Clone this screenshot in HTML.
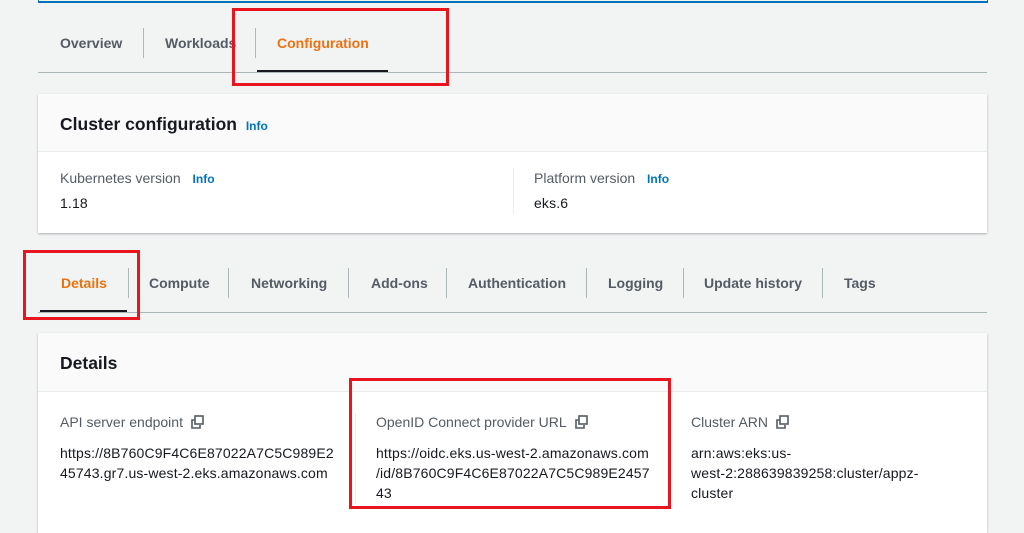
<!DOCTYPE html>
<html><head><meta charset="utf-8"><style>
*{margin:0;padding:0;box-sizing:border-box}
body{width:1024px;height:520px;background:#f2f3f3;font-family:"Liberation Sans",sans-serif;position:relative;overflow:hidden;color:#16191f}
.a{position:absolute;white-space:nowrap}
.tab{font-weight:bold;font-size:14px;color:#545b64}
.sep{position:absolute;width:1px;background:#aab7b8}
.card{position:absolute;left:38px;width:949px;background:#fff;box-shadow:0 1px 2px rgba(0,28,36,.3)}
.hd{background:#fafafa;border-bottom:1px solid #eaeded}
.lbl{font-size:14px;color:#545b64}
.val{font-size:14px;color:#16191f;line-height:20px;letter-spacing:0.15px}
.info{font-size:12px;font-weight:bold;color:#0073bb}
.red{position:absolute;border:3px solid #e8141e}
.cp{display:inline-block;vertical-align:-2px;margin-left:8px}
</style></head><body>
<div class="a" style="left:38px;top:0;width:950px;height:3px;border-bottom:2px solid #0073bb;border-left:1px solid #0073bb;border-right:1px solid #0073bb"></div>
<div class="a tab" style="left:60px;top:35px">Overview</div>
<div class="sep" style="left:143px;top:28px;height:30px"></div>
<div class="a tab" style="left:165px;top:35px">Workloads</div>
<div class="sep" style="left:255px;top:28px;height:30px"></div>
<div class="a tab" style="left:277px;top:35px;color:#ec7211">Configuration</div>
<div class="a" style="left:257px;top:70px;width:131px;height:2px;background:#16191f"></div>
<div class="a" style="left:38px;top:72px;width:949px;height:1px;background:#aab7b8"></div>

<div class="card" style="top:94px;height:139px">
<div class="hd" style="height:58px"></div>
<div class="a" style="left:22px;top:20px;font-size:17.5px;font-weight:bold">Cluster configuration <span class="info" style="margin-left:4px">Info</span></div>
<div class="a lbl" style="left:22px;top:76px">Kubernetes version <span class="info" style="margin-left:8px">Info</span></div>
<div class="a val" style="left:22px;top:99px">1.18</div>
<div class="sep" style="left:475px;top:74px;height:46px;background:#eaeded"></div>
<div class="a lbl" style="left:496px;top:76px">Platform version <span class="info" style="margin-left:8px">Info</span></div>
<div class="a val" style="left:496px;top:99px">eks.6</div>
</div>

<div class="a tab" style="left:61px;top:275px;color:#ec7211">Details</div>
<div class="sep" style="left:128px;top:268px;height:30px"></div>
<div class="a tab" style="left:149px;top:275px">Compute</div>
<div class="sep" style="left:228px;top:268px;height:30px"></div>
<div class="a tab" style="left:251px;top:275px">Networking</div>
<div class="sep" style="left:348px;top:268px;height:30px"></div>
<div class="a tab" style="left:371px;top:275px">Add-ons</div>
<div class="sep" style="left:446px;top:268px;height:30px"></div>
<div class="a tab" style="left:468px;top:275px">Authentication</div>
<div class="sep" style="left:586px;top:268px;height:30px"></div>
<div class="a tab" style="left:608px;top:275px">Logging</div>
<div class="sep" style="left:683px;top:268px;height:30px"></div>
<div class="a tab" style="left:704px;top:275px">Update history</div>
<div class="sep" style="left:822px;top:268px;height:30px"></div>
<div class="a tab" style="left:844px;top:275px">Tags</div>
<div class="a" style="left:40px;top:310px;width:87px;height:2px;background:#16191f"></div>
<div class="a" style="left:38px;top:312px;width:949px;height:1px;background:#aab7b8"></div>

<div class="card" style="top:333px;height:200px">
<div class="hd" style="height:59px"></div>
<div class="a" style="left:22px;top:20px;font-size:17.5px;font-weight:bold">Details</div>
<div class="sep" style="left:317px;top:80px;height:90px;background:#eaeded"></div>
<div class="sep" style="left:632px;top:80px;height:90px;background:#eaeded"></div>
</div>
<svg width="0" height="0" style="position:absolute"><defs><g id="cp"><rect x="4" y="1" width="8" height="8" fill="none" stroke="#545b64" stroke-width="1.6"/><path d="M4 5H1v8h8v-3" fill="none" stroke="#545b64" stroke-width="1.6"/></g></defs></svg>
<div class="a lbl" style="left:60px;top:414px">API server endpoint<svg class="cp" width="14" height="14"><use href="#cp"/></svg></div>
<div class="a val" style="left:60px;top:443px">https://8B760C9F4C6E87022A7C5C989E2<br>45743.gr7.us-west-2.eks.amazonaws.com</div>
<div class="a lbl" style="left:376px;top:414px">OpenID Connect provider URL<svg class="cp" width="14" height="14"><use href="#cp"/></svg></div>
<div class="a val" style="left:376px;top:443px">https://oidc.eks.us-west-2.amazonaws.com<br>/id/8B760C9F4C6E87022A7C5C989E2457<br>43</div>
<div class="a lbl" style="left:691px;top:414px">Cluster ARN<svg class="cp" width="14" height="14"><use href="#cp"/></svg></div>
<div class="a val" style="left:691px;top:443px">arn:aws:eks:us-<br>west-2:288639839258:cluster/appz-<br>cluster</div>

<div class="red" style="left:232px;top:8px;width:217px;height:78px"></div>
<div class="red" style="left:23px;top:250px;width:117px;height:70px"></div>
<div class="red" style="left:349px;top:378px;width:322px;height:131px"></div>
</body></html>
